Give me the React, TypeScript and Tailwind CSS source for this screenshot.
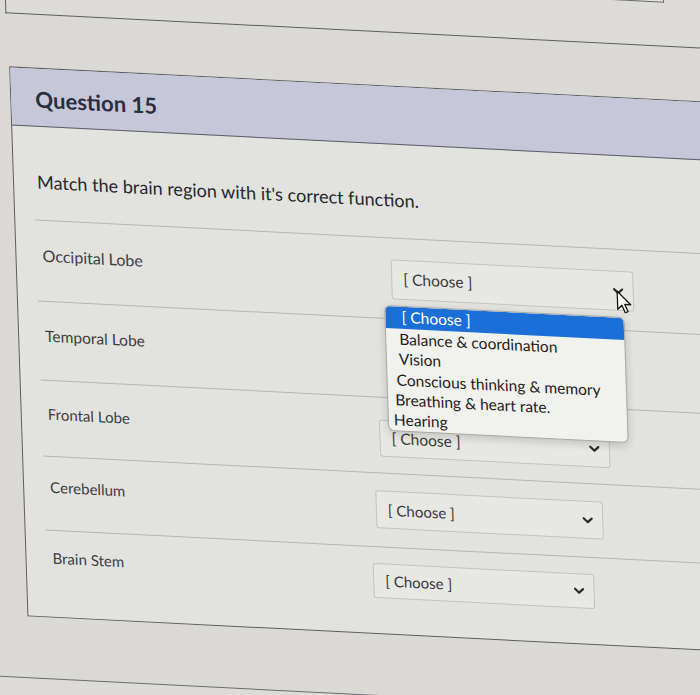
import React from "react";

type Row = {
  label: string;
  row: string;
  labelCls: string;
  sel: string;
};

const rows: Row[] = [
  { label: "Occipital Lobe", row: "h-[81px] border-b border-[#b7b7b3] relative", labelCls: "w-[354px] pt-[25px] text-[16px]", sel: "mt-[21px] w-[242px] h-[40px] text-[15.5px]" },
  { label: "Temporal Lobe", row: "h-[79px] border-b border-[#b7b7b3]", labelCls: "w-[352px] pt-[24px] text-[15.5px]", sel: "mt-[21px] w-[226px] h-[39px] text-[15.5px]" },
  { label: "Frontal Lobe", row: "h-[76px] border-b border-[#b7b7b3]", labelCls: "w-[337px] pt-[23px] text-[15px]", sel: "mt-[22px] w-[230px] h-[37px] text-[15.5px]" },
  { label: "Cerebellum", row: "h-[74px] border-b border-[#b7b7b3]", labelCls: "w-[331px] pt-[20px] text-[15px]", sel: "mt-[17px] w-[227px] h-[38px] text-[15px]" },
  { label: "Brain Stem", row: "h-[86px]", labelCls: "w-[326px] pt-[17px] text-[15px]", sel: "mt-[16px] w-[221px] h-[35px] text-[15px]" },
];

const options = [
  { text: "[ Choose ]", cls: "h-[22px] pl-[16px] bg-[#1c6fd6] text-white" },
  { text: "Balance & coordination", cls: "h-[20.5px] pl-[13px] text-[#1e1e1e]" },
  { text: "Vision", cls: "h-[20.5px] pl-[12px] text-[#1e1e1e]" },
  { text: "Conscious thinking & memory", cls: "h-[20.5px] pl-[9px] text-[#1e1e1e]" },
  { text: "Breathing & heart rate.", cls: "h-[20.5px] pl-[7px] text-[#1e1e1e]" },
  { text: "Hearing", cls: "h-[20px] pl-[5px] text-[#1e1e1e]" },
];

function Chevron() {
  return (
    <svg width="11" height="7" viewBox="0 0 11 7" className="flex-none">
      <path d="M1.5 1.5 L5.5 5.3 L9.5 1.5" fill="none" stroke="#2b2b2b" strokeWidth="2.2" strokeLinecap="round" strokeLinejoin="round" />
    </svg>
  );
}

function Cursor() {
  return (
    <svg width="18" height="26" viewBox="0 0 18 26">
      <path
        d="M1.5 1.5 L1.5 19.5 L5.8 15.3 L8.9 22.6 L11.8 21.4 L8.7 14.3 L14.6 14.3 Z"
        fill="#ffffff"
        stroke="#151515"
        strokeWidth="1.3"
        strokeLinejoin="round"
      />
    </svg>
  );
}

export default function App() {
  return (
    <div className="w-[700px] h-[695px] overflow-hidden bg-[#dad9d5] font-['Lato','Noto_Sans',sans-serif]">
      <div className="-mt-[40px] -ml-[30px] pl-[30px] w-[820px] h-[820px] origin-[30px_40px] skew-x-[1.9deg] skew-y-[2.9deg]">
        {/* previous block */}
        <div className="ml-[5px] w-[770px] h-[53px] border-l border-b border-[#5c5d63] bg-[#dcdbd7]">
          <div className="ml-[477px] w-[181px] h-[9px] border-r border-b border-[#6a6b70] bg-[#e2e1dd]" />
        </div>

        {/* question card */}
        <div className="mt-[53px] ml-[7px] w-[740px] border border-[#5c5d63] bg-[#e2e2df]">
          <div className="h-[58px] pt-[4px] pl-[24px] flex items-center bg-[#c6c7d9] border-b border-[#5c5d63]">
            <span className="text-[22px] leading-none font-bold text-[#2b2e3c]">Question 15</span>
          </div>

          <div className="pl-[20px] pt-[43px] pb-0">
            <p className="pl-[3px] text-[18px] leading-[24px] text-[#26282e]">
              Match the brain region with it's correct function.
            </p>

            <div className="mt-[26px] border-t border-[#b7b7b3]">
              {rows.map((r, i) => (
                <div key={r.label} className={`flex items-start ${r.row}`}>
                  <div className={`flex-none pl-[6px] leading-[20px] text-[#3c3e44] ${r.labelCls}`}>
                    {r.label}
                  </div>
                  <div
                    className={`flex-none flex items-center justify-between pl-[11px] pr-[9px] border border-[#c3c3bf] rounded-[3px] bg-[#e7e7e4] text-[#3a3a3c] ${r.sel}`}
                  >
                    <span>[ Choose ]</span>
                    <Chevron />
                  </div>

                  {i === 0 && (
                    <>
                      <div className="absolute left-[346px] top-[67px] w-[240px] rounded-[6px] overflow-hidden border border-[#a9a9a5] bg-[#f1f1ee] shadow-[0_3px_8px_rgba(0,0,0,0.16)] z-10">
                        {options.map((o) => (
                          <div key={o.text} className={`flex items-center text-[15.5px] leading-none whitespace-nowrap ${o.cls}`}>
                            {o.text}
                          </div>
                        ))}
                      </div>
                      <div className="absolute left-[578px] top-[40px] z-20">
                        <Cursor />
                      </div>
                    </>
                  )}
                </div>
              ))}
            </div>
          </div>
        </div>

        {/* next block */}
        <div className="mt-[61px] -ml-[30px] w-[800px] h-[80px] border-t border-[#6a6b70] bg-[#dcdbd7]" />
      </div>
    </div>
  );
}
